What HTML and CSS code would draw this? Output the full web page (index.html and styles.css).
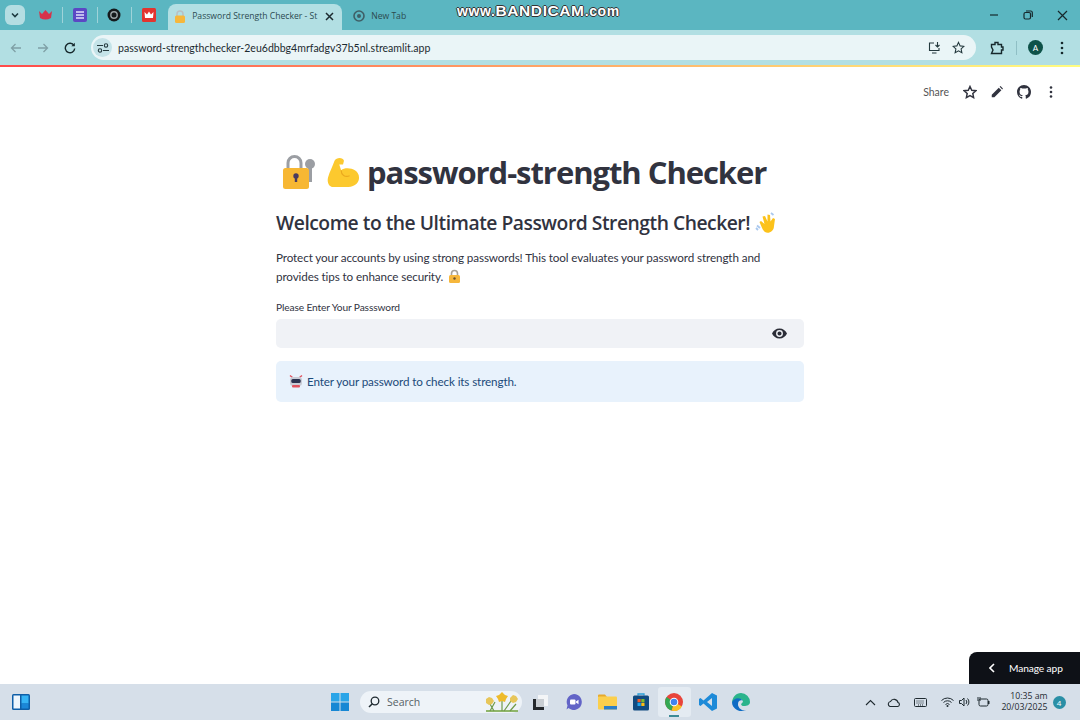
FILE: index.html
```html
<!DOCTYPE html>
<html>
    <head>
        <meta charset="UTF-8"/>
        <title>Password Strength Checker</title>
        <link rel="stylesheet" href="styles.css">
    </head>
    <body>
        <div class="Tabstrip">
            <span class="TabList">
                <svg width="10" height="10" viewBox="0 0 10 10"><path d="M2 3.500 5 6.500 8 3.500" fill="none" stroke="#1d3a40" stroke-width="1.600"/></svg>
            </span>
            <span class="Pinned Sep">
                <svg width="13" height="10" viewBox="0 0 13 10"><path d="M0 1 3 4 6.500 0 10 4 13 1 12 8Q6.500 11 1 8Z" fill="#d6334a"/></svg>
            </span>
            <span class="Pinned Sep">
                <svg width="14" height="14" viewBox="0 0 14 14"><rect width="14" height="14" rx="2" fill="#5b49c4"/><path d="M3 4H11M3 7H11M3 10H11" stroke="#e4e0fb" stroke-width="1.400"/></svg>
            </span>
            <span class="Pinned Sep">
                <svg width="14" height="14" viewBox="0 0 14 14"><circle cx="7" cy="7" r="6.500" fill="#15191c"/><circle cx="7" cy="7" r="3.200" fill="none" stroke="#9aa3a6" stroke-width="1.400"/></svg>
            </span>
            <span class="Pinned">
                <svg width="14" height="14" viewBox="0 0 14 14"><rect width="14" height="14" rx="1.500" fill="#e3342f"/><path d="M2.500 4 5 6.500 7 3.500 9 6.500 11.500 4 11 10H3Z" fill="#fff"/></svg>
            </span>
            <span class="Tab Active">
                <svg width="12" height="13" viewBox="0 0 12 13"><path d="M3 6V4a3 3 0 0 1 6 0V6" fill="none" stroke="#b9bfc2" stroke-width="1.500"/><rect x="1" y="5.500" width="10" height="7.500" rx="1.500" fill="#f6b73c"/></svg>
                <span class="TabTitle">Password Strength Checker - St</span>
                <svg width="9" height="9" viewBox="0 0 9 9"><path d="M1 1 8 8M8 1 1 8" stroke="#1c2b30" stroke-width="1.500"/></svg>
            </span>
            <span class="Tab NewTab">
                <svg width="12" height="12" viewBox="0 0 12 12"><circle cx="6" cy="6" r="5" fill="none" stroke="#3f5f66" stroke-width="1.600"/><circle cx="6" cy="6" r="2" fill="#3f5f66"/></svg>
                <span class="TabTitle">New Tab</span>
            </span>
            <span class="WinControls">
                <svg width="10" height="10" viewBox="0 0 10 10"><path d="M1 5H9" stroke="#16282c" stroke-width="1.200"/></svg>
                <svg width="10" height="10" viewBox="0 0 10 10"><rect x="1" y="2.500" width="6.500" height="6.500" rx="1.500" fill="none" stroke="#16282c" stroke-width="1.200"/><path d="M3 1H8A1.500 1.500 0 0 1 9.300 2.500V7" fill="none" stroke="#16282c" stroke-width="1.200"/></svg>
                <svg width="11" height="11" viewBox="0 0 11 11"><path d="M1 1 10 10M10 1 1 10" stroke="#16282c" stroke-width="1.200"/></svg>
            </span>
        </div>

        <div class="Toolbar">
            <span class="NavBtn">
                <svg width="12" height="12" viewBox="0 0 12 12"><path d="M11 6H1.500M5.500 2 1.500 6 5.500 10" fill="none" stroke="#7fa0a6" stroke-width="1.300"/></svg>
            </span>
            <span class="NavBtn">
                <svg width="12" height="12" viewBox="0 0 12 12"><path d="M1 6H10.500M6.500 2 10.500 6 6.500 10" fill="none" stroke="#7fa0a6" stroke-width="1.300"/></svg>
            </span>
            <span class="NavBtn">
                <svg width="12" height="12" viewBox="0 0 12 12"><path d="M10 3.500A4.700 4.700 0 1 0 10.700 6.500" fill="none" stroke="#16282c" stroke-width="1.400"/><path d="M10.800 .8V4.300H7.300Z" fill="#16282c"/></svg>
            </span>
            <div class="Omnibox">
                <span class="SiteInfo">
                    <svg width="12" height="10" viewBox="0 0 12 10"><path d="M0 2.500H6M6 7.500H12" stroke="#24393e" stroke-width="1.200"/><circle cx="9" cy="2.500" r="1.700" fill="none" stroke="#24393e" stroke-width="1.100"/><circle cx="3" cy="7.500" r="1.700" fill="none" stroke="#24393e" stroke-width="1.100"/></svg>
                </span>
                <span class="Url">password-strengthchecker-2eu6dbbg4mrfadgv37b5nl.streamlit.app</span>
                <svg class="OmniIcon" width="13" height="12" viewBox="0 0 13 12"><path d="M6 1H1.500V8.500H11V6M4 11H8.500" fill="none" stroke="#24393e" stroke-width="1.100"/><path d="M9.500 0V4.500M7.500 3 9.500 5 11.500 3" fill="none" stroke="#24393e" stroke-width="1.100"/></svg>
                <svg class="OmniIcon" width="13" height="13" viewBox="0 0 24 24"><path d="M12 2.500 15 9 22 9.800 16.800 14.500 18.200 21.500 12 18 5.800 21.500 7.200 14.500 2 9.800 9 9Z" fill="none" stroke="#24393e" stroke-width="2"/></svg>
            </div>
            <svg class="Ext" width="14" height="14" viewBox="0 0 14 14"><path d="M1.500 3.500H5V1.500H8V3.500H11.500V6H13V9H11.500V12.500H1.500L3 9 1.500 6Z" fill="none" stroke="#16282c" stroke-width="1.400"/></svg>
            <span class="ToolSep"></span>
            <span class="Avatar">A</span>
            <svg class="Kebab" width="4" height="14" viewBox="0 0 4 14"><circle cx="2" cy="2" r="1.300" fill="#16282c"/><circle cx="2" cy="7" r="1.300" fill="#16282c"/><circle cx="2" cy="12" r="1.300" fill="#16282c"/></svg>
        </div>

        <div class="Decoration"></div>

        <div class="Page">
            <div class="AppBar">
                <span class="Share">Share</span>
                <svg width="14" height="14" viewBox="0 0 24 24"><path d="M12 2.500 15 9 22 9.800 16.800 14.500 18.200 21.500 12 18 5.800 21.500 7.200 14.500 2 9.800 9 9Z" fill="none" stroke="#31333f" stroke-width="2.500"/></svg>
                <svg width="14" height="14" viewBox="0 0 24 24"><path d="M3 21V16.500L15 4.500 19.500 9 7.500 21ZM16.500 3 18 1.800 22.200 6 21 7.500Z" fill="#31333f"/></svg>
                <svg width="14" height="14" viewBox="0 0 16 16"><path fill="#31333f" d="M8 0C3.580 0 0 3.580 0 8c0 3.540 2.290 6.530 5.470 7.590.4.070.55-.17.55-.38 0-.19-.01-.82-.01-1.490-2.010.37-2.530-.49-2.690-.94-.09-.23-.48-.94-.82-1.130-.28-.15-.68-.52-.01-.53.63-.01 1.080.58 1.230.82.720 1.210 1.870.870 2.330.660.070-.520.280-.870.510-1.070-1.780-.2-3.640-.890-3.640-3.950 0-.870.310-1.590.820-2.150-.08-.2-.360-1.020.080-2.120 0 0 .670-.210 2.200.820.640-.180 1.320-.270 2-.270s1.360.090 2 .270c1.530-1.040 2.200-.820 2.200-.820.440 1.100.160 1.920.080 2.120.510.560.820 1.270.820 2.150 0 3.070-1.870 3.750-3.650 3.950.290.250.540.730.540 1.480 0 1.070-.010 1.930-.010 2.200 0 .210.150.460.550.380A8.010 8.010 0 0 0 16 8c0-4.420-3.580-8-8-8z"/></svg>
                <svg class="AppMenu" width="4" height="12" viewBox="0 0 4 12"><circle cx="2" cy="1.500" r="1.300" fill="#31333f"/><circle cx="2" cy="6" r="1.300" fill="#31333f"/><circle cx="2" cy="10.500" r="1.300" fill="#31333f"/></svg>
            </div>

            <div class="Block">
                <h1 class="Title">
                    <svg class="TitleEmoji" width="35" height="35" viewBox="0 0 35 35"><path d="M5 14V8a6.500 6.500 0 0 1 13 0V14" fill="none" stroke="#9b9ea3" stroke-width="3"/><circle cx="27" cy="9" r="5" fill="#9b9ea3"/><rect x="25" y="10" width="4" height="17" fill="#9b9ea3"/><rect x="0" y="13" width="26" height="21" rx="2.500" fill="#f7b733"/><circle cx="13" cy="21" r="2.700" fill="#4a3a5e"/><rect x="11.800" y="21" width="2.400" height="6" fill="#4a3a5e"/></svg>
                    <svg class="TitleEmoji" width="33" height="33" viewBox="0 0 35 35"><path d="M8 5C10 1 17 1 18 5L17 9 13 9 15 15C20 11 34 13 34 23 34 30 27 33 20 33H7C2 33 0 28 1 23 3 16 6 11 8 5Z" fill="#fcc92e"/><path d="M15 15C15 20 19 23 24 21" fill="none" stroke="#eaa91f" stroke-width="1.200"/></svg>
                    <span>password-strength Checker</span>
                </h1>
                <h3 class="Welcome">
                    Welcome to the Ultimate Password Strength Checker!
                    <svg width="22" height="22" viewBox="0 0 22 22"><path d="M2 13.500 5 16M1 16 3 18M16 1 18.500 3" fill="none" stroke="#a9c8ee" stroke-width="1.800"/><path d="M6 9 9.500 12 7.500 4.500 10 4 12.500 9.500 12.500 2.500 15 3 15.500 9.500 18 6 20 7 19 14C19 20 13 22 10 20 7.500 18.500 6 13 4.500 10Z" fill="#fcc21b"/></svg>
                </h3>
                <p class="Intro">
                    Protect your accounts by using strong passwords! This tool evaluates your password strength and provides tips to enhance security.
                    <svg class="InlineLock" width="13" height="14" viewBox="0 0 13 14"><path d="M3.500 7V4.500a3 3 0 0 1 6 0V7" fill="none" stroke="#a7a196" stroke-width="1.600"/><rect x="1" y="6" width="11" height="8" rx="1.500" fill="#f6b73c"/><circle cx="6.500" cy="9.500" r="1.200" fill="#6b5330"/></svg>
                </p>
                <label class="FieldLabel">Please Enter Your Passsword</label>
                <div class="Field">
                    <svg width="15" height="11" viewBox="0 0 24 16"><path fill-rule="evenodd" d="M12 0C6.500 0 2 3.300 0 8 2 12.700 6.500 16 12 16S22 12.700 24 8C22 3.300 17.500 0 12 0ZM12 13.500A5.500 5.500 0 1 1 12 2.500 5.500 5.500 0 0 1 12 13.500ZM12 4.700A3.300 3.300 0 1 0 12 11.300 3.300 3.300 0 0 0 12 4.700Z" fill="#2b2d37"/></svg>
                </div>
                <div class="Alert">
                    <svg width="14" height="14" viewBox="0 0 14 14"><path d="M1 1.500 3.500 3.500M13 1.500 10.500 3.500" stroke="#e0525e" stroke-width="1.500"/><rect x="1" y="3" width="12" height="9" rx="3" fill="#c9ccd6"/><rect x="2.300" y="5" width="9.400" height="4" rx="1.500" fill="#2b3350"/><rect x="3" y="11" width="8" height="2.500" rx="1" fill="#e0525e"/></svg>
                    <span>Enter your password to check its strength.</span>
                </div>
            </div>
        </div>

        <div class="Taskbar">
            <svg class="Widgets" width="18" height="16" viewBox="0 0 18 16"><rect width="18" height="16" rx="1.500" fill="#0f5fa8"/><rect x="1.500" y="1.500" width="6.500" height="13" fill="#eef6fd"/><rect x="9.500" y="1.500" width="7" height="8" fill="#36b4f5"/><rect x="9.500" y="9.500" width="7" height="5" fill="#1b87d8"/></svg>
            <div class="Dock">
                <svg width="18" height="18" viewBox="0 0 18 18"><rect width="8.500" height="8.500" fill="#2aa5e8"/><rect x="9.500" width="8.500" height="8.500" fill="#2aa5e8"/><rect y="9.500" width="8.500" height="8.500" fill="#1687d4"/><rect x="9.500" y="9.500" width="8.500" height="8.500" fill="#1687d4"/></svg>
                <div class="Search">
                    <svg width="12" height="12" viewBox="0 0 12 12"><circle cx="7" cy="5" r="3.800" fill="none" stroke="#1f2a30" stroke-width="1.300"/><path d="M4.300 7.700 1 11" stroke="#1f2a30" stroke-width="1.500"/></svg>
                    <span>Search</span>
                    <svg class="Daffodil" width="36" height="20" viewBox="0 0 36 20"><path d="M2 19H34" stroke="#8fb56a" stroke-width="2"/><path d="M6 19 11 10M18 19V7M20 19 27 9M10 19 6 12M26 19 32 12" stroke="#6f9a4a" stroke-width="1.200"/><path d="M2 7 5 5 8 6 10 9 8 12 5 13 2 11Z" fill="#e7c65a"/><path d="M18 0 21 3 24 4 22 7 21 10 18 9 15 10 14 7 12 4 15 3Z" fill="#eebb2c"/><path d="M29 3 32 4 34 7 32 10 29 11 26 9 26 6Z" fill="#e7c65a"/></svg>
                </div>
                <span class="DockItem">
                    <svg width="17" height="17" viewBox="0 0 17 17"><rect x="6" y="1" width="10" height="11" fill="#f3f5f7"/><rect x="1" y="5" width="11" height="11" fill="#24282c"/><rect x="4" y="5" width="8" height="8" fill="#c8cdd2"/></svg>
                </span>
                <span class="DockItem">
                    <svg width="18" height="18" viewBox="0 0 18 18"><path d="M9 1A8 8 0 1 1 3.500 15L1.500 16.500 2.500 12.500A8 8 0 0 1 9 1Z" fill="#6264c7"/><rect x="5" y="6.500" width="5.500" height="5" rx="1" fill="#fff"/><path d="M11 8.500 13.500 6.800V11.200L11 9.500Z" fill="#fff"/></svg>
                </span>
                <span class="DockItem">
                    <svg width="19" height="16" viewBox="0 0 19 16"><path d="M0 1.500A1 1 0 0 1 1 .5H7L9 3H0Z" fill="#e6a92c"/><rect y="2.500" width="19" height="13" rx="1" fill="#fbcf4c"/><rect x="6" y="12" width="13" height="3.500" fill="#2b7fc9"/></svg>
                </span>
                <span class="DockItem">
                    <svg width="18" height="18" viewBox="0 0 18 18"><path d="M6 2.500V1h6V2.500" fill="none" stroke="#2a9fd8" stroke-width="1.300"/><rect x="1" y="2.500" width="16" height="15" rx="1.500" fill="#114a80"/><rect x="5.500" y="6" width="3.200" height="3.200" fill="#f05a2a"/><rect x="9.300" y="6" width="3.200" height="3.200" fill="#7cbb2c"/><rect x="5.500" y="9.800" width="3.200" height="3.200" fill="#1ea6ee"/><rect x="9.300" y="9.800" width="3.200" height="3.200" fill="#fbbb14"/></svg>
                </span>
                <span class="DockItem Running">
                    <svg width="18" height="18" viewBox="0 0 18 18"><circle cx="9" cy="9" r="9" fill="#e8453c"/><path d="M9 9 17 13.500A9 9 0 0 1 6.500 17.600Z" fill="#f8c227"/><path d="M9 9 6.500 17.600A9 9 0 0 1 1.600 4Z" fill="#34a853"/><circle cx="9" cy="9" r="4.300" fill="#fff"/><circle cx="9" cy="9" r="3.300" fill="#3f84ee"/></svg>
                </span>
                <span class="DockItem">
                    <svg width="18" height="18" viewBox="0 0 18 18"><path d="M13 0 18 2.500V15.500L13 18 4.500 10.500 1.500 13 0 12V6L1.500 5 4.500 7.500ZM13 5 8 9 13 13Z" fill="#1d8ad8"/></svg>
                </span>
                <span class="DockItem">
                    <svg width="18" height="18" viewBox="0 0 18 18"><path d="M9 0A9 9 0 0 1 18 9C18 12 15 13 12 13 9 13 8.500 11 10 10 12 9 10.500 6 7.500 6 3.500 6 1 9 0 9.500 .5 4 4 0 9 0Z" fill="#2bb48c"/><path d="M0 9.500C1 5 8 3.500 10.500 7.500 7 6.500 5 10 6.500 13.500 8 17 12 18.500 15 16.500 12 18.500 8 18.800 5 17 2 15.500 0 12.500 0 9.500Z" fill="#0f6cc4"/></svg>
                </span>
            </div>
            <div class="Tray">
                <svg width="11" height="7" viewBox="0 0 11 7"><path d="M1 6 5.500 1.500 10 6" fill="none" stroke="#1f2a30" stroke-width="1.100"/></svg>
                <svg width="13" height="9" viewBox="0 0 13 9"><path d="M3 8.500H10.500A2 2 0 0 0 11 4.600 4 4 0 0 0 3.500 3.500 2.600 2.600 0 0 0 3 8.500Z" fill="none" stroke="#1f2a30" stroke-width="1.100"/></svg>
                <svg class="TrayKeys" width="13" height="9" viewBox="0 0 13 9"><rect x=".5" y=".5" width="12" height="8" rx="1" fill="none" stroke="#1f2a30"/><path d="M2.500 3H10.500M2.500 5H10.500M4 7H9" stroke="#1f2a30" stroke-dasharray="1 1"/></svg>
                <svg class="TrayWifi" width="13" height="10" viewBox="0 0 13 10"><path d="M.5 3.500A8.500 8.500 0 0 1 12.500 3.500M2.500 5.500A5.500 5.500 0 0 1 10.500 5.500M4.500 7.500A2.800 2.800 0 0 1 8.500 7.500" fill="none" stroke="#1f2a30"/><circle cx="6.500" cy="9" r="1" fill="#1f2a30"/></svg>
                <svg class="TraySound" width="11" height="10" viewBox="0 0 11 10"><path d="M0.500 3.500H2.500L5 1V9L2.500 6.500H.5Z" fill="none" stroke="#1f2a30"/><path d="M7 3A3 3 0 0 1 7 7M8.500 1.500A5 5 0 0 1 8.500 8.500" fill="none" stroke="#1f2a30"/></svg>
                <svg class="TrayPower" width="13" height="10" viewBox="0 0 13 10"><rect x="2" y="2" width="9" height="7" rx="1.500" fill="none" stroke="#1f2a30"/><path d="M1 0V4M3 0V4" stroke="#1f2a30"/><rect x="11" y="4" width="1.500" height="3" fill="#1f2a30"/></svg>
                <div class="Clock"><span>10:35 am</span><span>20/03/2025</span></div>
                <span class="Badge">4</span>
            </div>
        </div>

        <div class="Watermark">www.<span class="Brand">BANDICAM</span>.com</div>
        <div class="Manage">
            <svg width="6" height="10" viewBox="0 0 6 10"><path d="M5 1 1 5 5 9" fill="none" stroke="#fff" stroke-width="1.600"/></svg>
            <span>Manage app</span>
        </div>
    </body>
</html>
```

FILE: styles.css
```css
html, body
{
    margin:0;
    height:720px;
    overflow:hidden;
}
body
{
    position:relative;
    display:flex;
    flex-direction:column;
    font-family:"Lato", "Liberation Sans", sans-serif;
    color:#31333f;
    background:#fff;
}
svg
{
    flex:none;
}

/* browser chrome */
.Tabstrip
{
    display:flex;
    align-items:flex-end;
    height:30px;
    padding-left:5px;
    background:#5bb6c1;
    color:#2b4a50;
    font-size:8.600px;
    box-sizing:border-box;
}
.TabList
{
    display:flex;
    align-items:center;
    justify-content:center;
    width:20px;
    height:20px;
    margin-right:4px;
    margin-bottom:5px;
    border-radius:6px;
    background:#b4dde2;
}
.Pinned
{
    display:flex;
    align-items:center;
    justify-content:center;
    width:34.300px;
    height:16px;
    margin-bottom:7px;
    box-sizing:border-box;
}
.Sep
{
    border-right:1px solid #9fd3d9;
}
.Tab
{
    display:flex;
    align-items:center;
    gap:6px;
    width:174px;
    height:26px;
    padding:0 8px 2px 6px;
    box-sizing:border-box;
    border-radius:8px 8px 0 0;
}
.Tab.Active
{
    margin-left:2px;
    background:#b2dfe3;
}
.NewTab
{
    margin-left:5px;
}
.TabTitle
{
    flex:1;
    white-space:nowrap;
    font-family:"Open Sans", sans-serif;
}
.WinControls
{
    display:flex;
    align-items:center;
    gap:24px;
    height:30px;
    margin-left:auto;
    padding-right:12px;
}
.Toolbar
{
    display:flex;
    align-items:center;
    height:35px;
    padding-left:2px;
    background:#b2dfe3;
    box-sizing:border-box;
}
.NavBtn
{
    display:flex;
    justify-content:center;
    width:27px;
}
.Omnibox
{
    display:flex;
    align-items:center;
    gap:11px;
    width:885px;
    height:25px;
    margin-left:8px;
    padding-right:11px;
    box-sizing:border-box;
    border-radius:13px;
    background:#eaf5f7;
}
.SiteInfo
{
    display:flex;
    align-items:center;
    justify-content:center;
    width:19px;
    height:19px;
    margin-left:2px;
    margin-right:-5px;
    border-radius:50%;
    background:#c4e3e8;
}
.Url
{
    flex:1;
    font-family:"Lato", sans-serif;
    font-size:10.550px;
    color:#1c2b30;
}
.Ext
{
    margin-left:14px;
}
.ToolSep
{
    width:1px;
    height:14px;
    margin:0 11px 0 12px;
    background:#8fbfc5;
}
.Avatar
{
    display:flex;
    align-items:center;
    justify-content:center;
    width:15px;
    height:15px;
    border-radius:50%;
    background:#0e5249;
    color:#fff;
    font-size:8px;
}
.Kebab
{
    margin-left:17px;
}
.Decoration
{
    height:2px;
    background:linear-gradient(90deg, #ff4b4b, #fffd80);
}

/* streamlit page */
.Page
{
    flex:1;
    min-height:0;
}
.AppBar
{
    display:flex;
    align-items:center;
    justify-content:flex-end;
    gap:13px;
    height:14px;
    margin-top:18px;
    padding-right:27px;
}
.AppMenu
{
    margin-left:5px;
}
.Share
{
    margin-right:1px;
    font-size:10.500px;
    color:#555;
}
.Block
{
    display:flex;
    flex-direction:column;
    width:528px;
    margin:0 auto;
}
.Title
{
    display:flex;
    align-items:center;
    gap:9px;
    height:40px;
    margin:53px 0 0 7px;
    font-size:31px;
    line-height:40px;
    font-weight:700;
    white-space:nowrap;
    font-family:"Open Sans", sans-serif;
    letter-spacing:-1.050px;
}
.TitleEmoji + span
{
    margin-left:-2px;
}
.Welcome
{
    display:flex;
    align-items:center;
    gap:5px;
    margin:16px 0 0;
    font-size:19.300px;
    line-height:30px;
    font-weight:600;
    white-space:nowrap;
    font-family:"Open Sans", sans-serif;
    letter-spacing:-.480px;
}
.Intro
{
    margin:10px 0 0;
    padding-right:16px;
    font-size:11.700px;
    line-height:19px;
    letter-spacing:-.120px;
}
.InlineLock
{
    margin-left:2px;
    vertical-align:-2px;
}
.FieldLabel
{
    margin-top:14px;
    font-size:10.200px;
    line-height:14px;
    letter-spacing:-.130px;
}
.Field
{
    display:flex;
    align-items:center;
    justify-content:flex-end;
    height:29px;
    margin-top:5px;
    padding-right:17px;
    border-radius:5px;
    background:#f0f2f6;
}
.Alert
{
    display:flex;
    align-items:center;
    gap:4px;
    height:41px;
    margin-top:13px;
    padding-left:13px;
    border-radius:5px;
    box-sizing:border-box;
    padding-bottom:1px;
    background:#e8f2fc;
    color:#1b4a7a;
    font-size:11.700px;
    letter-spacing:-.130px;
}

/* taskbar */
.Taskbar
{
    display:flex;
    align-items:center;
    height:36px;
    background:#d6dfe9;
    font-family:"Open Sans", sans-serif;
    color:#1f2a30;
}
.Widgets
{
    margin-left:12px;
}
.Dock
{
    display:flex;
    align-items:center;
    margin-left:301px;
}
.Search
{
    display:flex;
    align-items:center;
    gap:7px;
    width:162px;
    height:22px;
    margin-left:11px;
    padding-left:8px;
    box-sizing:border-box;
    border-radius:11px;
    background:#eef3f8;
    font-size:10.500px;
    color:#555f66;
}
.Daffodil
{
    margin-left:auto;
    margin-right:2px;
}
.DockItem
{
    display:flex;
    align-items:center;
    justify-content:center;
    width:33.400px;
    height:30px;
}
.Search + .DockItem
{
    margin-left:2px;
}
.Running
{
    border-radius:3px;
    background-color:#e4ebf2;
    background-image:linear-gradient(#3d8a96, #3d8a96);
    background-size:10px 2px;
    background-position:center bottom;
    background-repeat:no-repeat;
}
.Tray
{
    display:flex;
    align-items:center;
    gap:11px;
    margin-left:auto;
    padding-right:14.500px;
}
.TrayKeys, .TrayWifi
{
    margin-left:3px;
}
.TraySound
{
    margin-left:-6px;
}
.TrayPower
{
    margin-left:-4px;
}
.Clock
{
    display:flex;
    flex-direction:column;
    align-items:flex-end;
    font-size:8.700px;
    line-height:11.500px;
}
.Badge
{
    display:flex;
    align-items:center;
    justify-content:center;
    width:13px;
    height:13px;
    margin-left:-6px;
    border-radius:50%;
    background:#2a8fa6;
    color:#fff;
    font-size:8px;
}

/* overlays */
.Watermark
{
    position:absolute;
    left:457px;
    top:2px;
    color:#fff;
    font-family:"Liberation Sans", sans-serif;
    font-size:14px;
    font-weight:700;
    line-height:18px;
    letter-spacing:.600px;
    text-shadow:-1px 0 #333, 1px 0 #333, 0 -1px #333, 0 1px #333;
}
.Brand
{
    font-size:15.500px;
}
.Manage
{
    position:absolute;
    right:0;
    top:652px;
    display:flex;
    align-items:center;
    gap:14px;
    width:111px;
    height:32px;
    padding-left:20px;
    box-sizing:border-box;
    border-radius:8px 0 0 0;
    background:#0e1117;
    color:#fff;
    font-size:10.200px;
    letter-spacing:-.100px;
}
```
